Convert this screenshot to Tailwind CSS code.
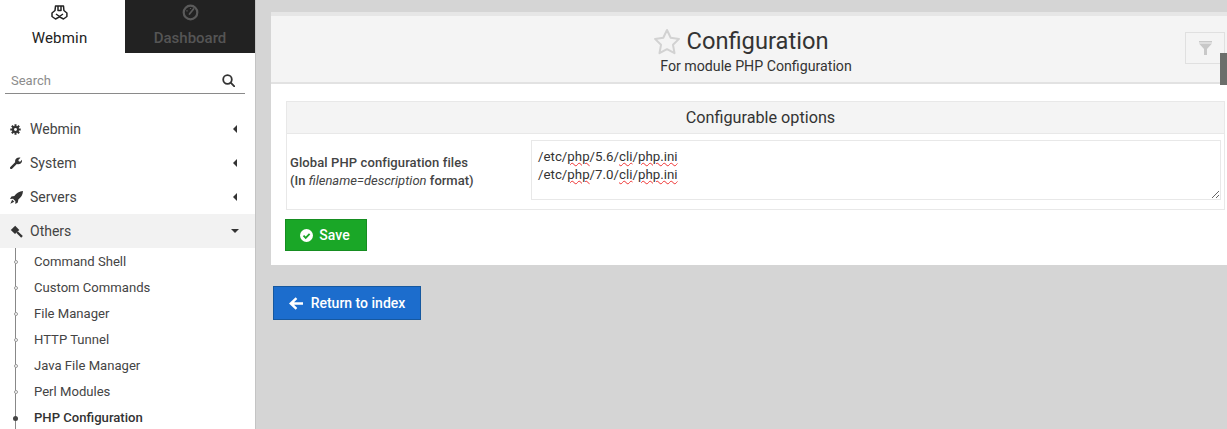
<!DOCTYPE html>
<html>
<head>
  <title>Configuration</title>
  <script src="https://cdn.jsdelivr.net/npm/@tailwindcss/browser@4"></script>
</head>
<body class="bg-[#d5d5d5] font-['Roboto',sans-serif] text-[#333] h-[429px] overflow-hidden">
<div class="flex h-[429px] overflow-hidden">
  <!-- sidebar -->
  <aside class="w-[256px] h-[429px] shrink-0 bg-white border-r border-[#c4c4c4] overflow-hidden">
    <div class="flex h-[53px]">
      <div class="w-[119px] flex flex-col items-center pt-[5px] text-[#222]">
        <svg class="w-[17px] h-[16px]" viewBox="0 0 17 16" fill="none" stroke="#222" stroke-width="1.500" stroke-linejoin="round"><path d="M4.500 1h8l.4 4.500 3 2.500v3.500L12.500 14 8.500 11.800 4.500 14 1 11.500V8l3-2.500z"/><path d="M7 1v4.500h3V1M5 9l3.500 2.500L12 9"/></svg>
        <span class="text-[15px] leading-[20px] mt-[7px] tracking-[0.2px]">Webmin</span>
      </div>
      <div class="w-[6px]"></div>
      <div class="w-[130px] bg-[#222] flex flex-col items-center pt-[4px] text-[#555]">
        <svg class="w-[17px] h-[17px]" viewBox="0 0 17 17" fill="none" stroke="#5a5a5a" stroke-width="2.200"><circle cx="8.500" cy="8.500" r="6.800"/><path d="M7.500 10l4-5" stroke-linecap="round" stroke-width="1.800"/><path d="M4.500 6.500l1 .8M8.500 4v1" stroke-width="1.200"/></svg>
        <span class="text-[15px] leading-[20px] mt-[7px] font-medium">Dashboard</span>
      </div>
    </div>
    <div class="ml-[5px] mr-[10px] mt-[15px] h-[26px] border-b border-[#8a8a8a] flex items-center justify-between pl-[6px] pr-[10px]">
      <span class="text-[13px] text-[#8c8c8c]">Search</span>
      <svg class="w-[13px] h-[13px]" viewBox="0 0 13 13" fill="none" stroke="#333" stroke-width="1.800"><circle cx="5.500" cy="5.500" r="4.300"/><path d="M8.700 8.700l3.600 3.600" stroke-linecap="round"/></svg>
    </div>
    <nav class="mt-[18px] text-[14px] text-[#444]">
      <div class="h-[34px] flex items-center pl-[10px] pr-[18px]">
        <svg class="w-[11px] h-[11px] mr-[9px]" viewBox="0 0 12 12"><path d="M6 .3v11.400M.3 6h11.400M2 2l8 8M10 2l-8 8" stroke="#333" stroke-width="2.200"/><circle cx="6" cy="6" r="3.800" fill="#333"/><circle cx="6" cy="6" r="1.600" fill="#fff"/></svg>
        <span class="flex-1">Webmin</span>
        <span class="w-0 h-0 border-y-[4px] border-y-transparent border-r-[4px] border-r-[#333]"></span>
      </div>
      <div class="h-[34px] flex items-center pl-[10px] pr-[18px]">
        <svg class="w-[12px] h-[12px] mr-[8px]" viewBox="0 0 12 12"><path d="M1.200 10.800l5-5" stroke="#333" stroke-width="2.400" stroke-linecap="round"/><path d="M5 4.500C5 1.800 7.800 0 10.500.8L8.300 3l.5 1.300 1.300.4L12 2.800c.5 3-2.200 5-5 4.200z" fill="#333"/></svg>
        <span class="flex-1">System</span>
        <span class="w-0 h-0 border-y-[4px] border-y-transparent border-r-[4px] border-r-[#333]"></span>
      </div>
      <div class="h-[34px] flex items-center pl-[10px] pr-[18px]">
        <svg class="w-[13px] h-[13px] mr-[7px]" viewBox="0 0 12 12" fill="#333"><path d="M12 0C8.500.2 6 1.800 4 4.500L1.300 5 0 7.300l2.800-.1 2.200 2.200-.1 2.600L7.200 10.500l.5-2.700C10.200 6 11.800 3.500 12 0z"/><path d="M2 8L.3 11.700 4 10z"/></svg>
        <span class="flex-1">Servers</span>
        <span class="w-0 h-0 border-y-[4px] border-y-transparent border-r-[4px] border-r-[#333]"></span>
      </div>
      <div class="h-[34px] flex items-center pl-[10px] pr-[16px] bg-[#f2f2f2]">
        <svg class="w-[13px] h-[13px] mr-[7px]" viewBox="0 0 13 13" fill="#333"><path d="M5.200.8L9.300 4.900 5 9 .8 5z"/><path d="M7.800 6.300l5 4.800-1.600 1.600-4.900-4.900z"/></svg>
        <span class="flex-1">Others</span>
        <span class="w-0 h-0 border-x-[4px] border-x-transparent border-t-[4px] border-t-[#333]"></span>
      </div>
      <ul class="relative text-[13.1px] leading-[26px] text-[#444] pl-[34px] pt-[1px]">
        <li class="absolute left-[15px] top-0 h-[200px] w-px bg-[#888]"></li>
        <li class="relative">Command Shell<span class="absolute left-[-20px] top-[11px] w-[4px] h-[4px] rounded-full border border-[#999] bg-white"></span></li>
        <li class="relative">Custom Commands<span class="absolute left-[-20px] top-[11px] w-[4px] h-[4px] rounded-full border border-[#999] bg-white"></span></li>
        <li class="relative">File Manager<span class="absolute left-[-20px] top-[11px] w-[4px] h-[4px] rounded-full border border-[#999] bg-white"></span></li>
        <li class="relative">HTTP Tunnel<span class="absolute left-[-20px] top-[11px] w-[4px] h-[4px] rounded-full border border-[#999] bg-white"></span></li>
        <li class="relative">Java File Manager<span class="absolute left-[-20px] top-[11px] w-[4px] h-[4px] rounded-full border border-[#999] bg-white"></span></li>
        <li class="relative">Perl Modules<span class="absolute left-[-20px] top-[11px] w-[4px] h-[4px] rounded-full border border-[#999] bg-white"></span></li>
        <li class="relative font-medium text-[#333]">PHP Configuration<span class="absolute left-[-21px] top-[11px] w-[5px] h-[5px] rounded-full bg-[#444]"></span></li>
      </ul>
    </nav>
  </aside>

  <!-- main -->
  <main class="relative flex-1 pl-[15px] pt-[12px]">
    <section class="bg-white border-t-[4px] border-[#e6e6e6] h-[253px]">
      <header class="relative h-[68px] bg-[#f4f4f4] border-b-2 border-[#e2e2e2] flex flex-col items-center">
        <div class="flex items-center h-[40px] mt-[5px] mr-[16px]">
          <svg class="w-[28px] h-[27px] mr-[5px]" viewBox="0 0 28 27" fill="none" stroke="#d2d2d2" stroke-width="2" stroke-linejoin="round"><path d="M14 2l3.700 7.800 8.300 1.100-6 5.900 1.500 8.400L14 21.200l-7.500 4 1.500-8.400-6-5.900 8.300-1.100z"/></svg>
          <h1 class="text-[23.700px] leading-[40px] text-[#333]">Configuration</h1>
        </div>
        <p class="text-[14.200px] leading-[18px] mt-[-4px] ml-[14px] text-[#333]">For module PHP Configuration</p>
        <button class="absolute right-[2px] top-[16px] w-[40px] h-[32px] border border-[#e0e0e0] flex items-center justify-center">
          <svg class="w-[13px] h-[14px]" viewBox="0 0 13 14"><path d="M0 0h13v1.500H0zM0 2.500h13L8 8v6H5V8z" fill="#c8c8c8"/></svg>
        </button>
      </header>
      <div class="pl-[15px] pr-[2px] pt-[17px]">
        <div class="border border-[#e8e8e8]">
          <div class="h-[32px] bg-[#f4f4f4] border-b border-[#e8e8e8] flex items-center justify-center pl-[10px] pt-[2px] text-[16.200px] text-[#333]">Configurable options</div>
          <div class="h-[75px] flex items-start pr-[3px] pt-[6px]">
            <div class="w-[244px] pl-[3px] pt-[14px] text-[13px] leading-[18px] text-[#444] font-medium shrink-0">
              <p class="tracking-[0.1px]">Global PHP configuration files</p>
              <p>(In <i class="font-normal">filename=description</i> format)</p>
            </div>
            <div class="flex-1 h-[60px] border border-[#e8e8e8] resize overflow-auto px-[6px] pt-[7px] text-[13.300px] leading-[18px] text-[#333]">
              <p>/etc/<span class="underline decoration-wavy decoration-[#e33] decoration-1">php</span>/5.6/<span class="underline decoration-wavy decoration-[#e33] decoration-1">cli</span>/<span class="underline decoration-wavy decoration-[#e33] decoration-1">php.ini</span></p>
              <p>/etc/<span class="underline decoration-wavy decoration-[#e33] decoration-1">php</span>/7.0/<span class="underline decoration-wavy decoration-[#e33] decoration-1">cli</span>/<span class="underline decoration-wavy decoration-[#e33] decoration-1">php.ini</span></p>
            </div>
          </div>
        </div>
        <button class="mt-[9px] ml-[-1px] w-[82px] h-[32px] pr-[2px] bg-[#1aa727] border border-[#168d21] text-white text-[14px] font-medium flex items-center justify-center gap-[6px]">
          <svg class="w-[13px] h-[13px]" viewBox="0 0 13 13"><circle cx="6.500" cy="6.500" r="6.500" fill="#fff"/><path d="M3.500 6.700l2.200 2.200 3.900-4" fill="none" stroke="#1aa727" stroke-width="1.800"/></svg>
          Save
        </button>
      </div>
    </section>
    <button class="mt-[21px] ml-[2px] w-[148px] h-[34px] bg-[#1c6dcd] border border-[#16589f] text-white text-[14px] font-medium flex items-center justify-center gap-[8px]">
      <svg class="w-[14px] h-[13px]" viewBox="0 0 13 12"><path d="M6.200.3l1.500 1.500-3 3H13v2.400H4.700l3 3-1.500 1.500L0 6z" fill="#fff"/></svg>
      Return to index
    </button>
    <div class="absolute right-0 top-[53px] w-[7px] h-[32px] bg-[#6b6e6b]"></div>
  </main>
</div>
</body>
</html>
